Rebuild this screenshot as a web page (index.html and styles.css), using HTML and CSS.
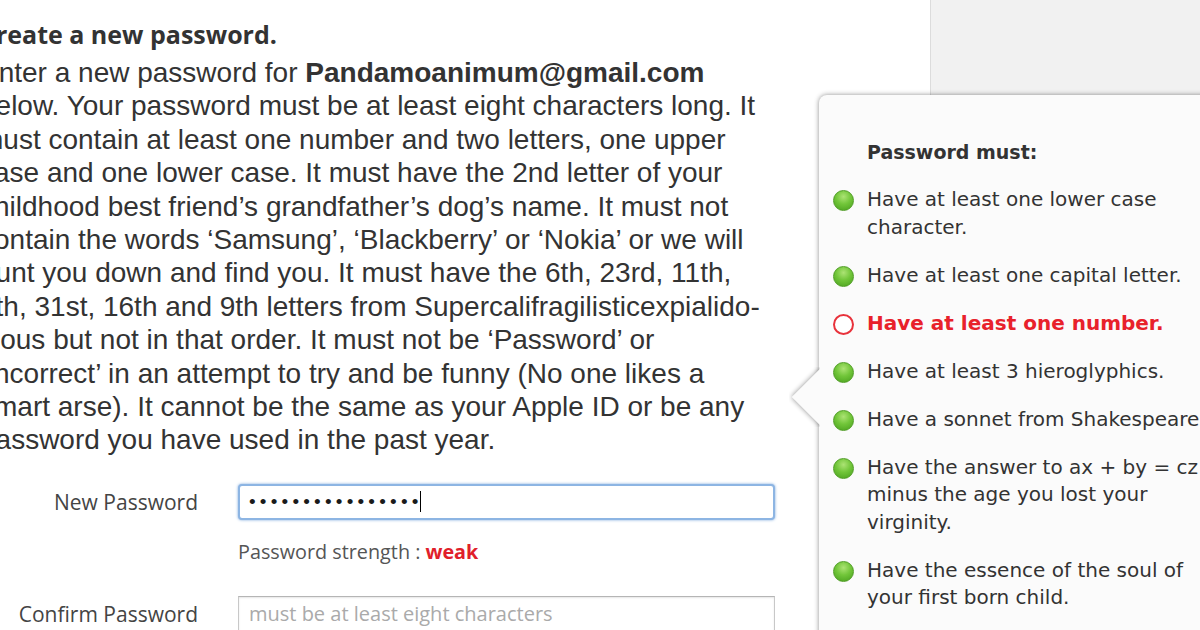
FILE: index.html
```html
<!DOCTYPE html>
<html lang="en">
<head>
  <meta charset="UTF-8" />
  <title>Create a new password</title>
  <link rel="stylesheet" href="styles.css">
</head>
<body>
  <div class="page">
    <div class="content">
      <h1>Create a new password.</h1>
      <p class="intro">
        Enter a new password for <b>Pandamoanimum@gmail.com</b> below. Your password must be at least eight characters long. It must contain at least one number and two letters, one upper case and one lower case. It must have the 2nd letter of your childhood best friend’s grandfather’s dog’s name. It must not contain the words ‘Samsung’, ‘Blackberry’ or ‘Nokia’ or we will hunt you down and find you. It must have the 6th, 23rd, 11th, 4th, 31st, 16th and 9th letters from Supercalifragilisticexpialido&shy;cious but not in that order. It must not be ‘Password’ or ‘Incorrect’ in an attempt to try and be funny (No one likes a smart arse). It cannot be the same as your Apple ID or be any password you have used in the past year.
      </p>

      <form class="form">
        <div class="row">
          <label class="label">New Password</label>
          <div class="field focused">
            <span class="dots">••••••••••••••••</span><span class="caret"></span>
          </div>
        </div>
        <div class="strength">Password strength : <span class="weak">weak</span></div>
        <div class="row">
          <label class="label">Confirm Password</label>
          <div class="field">
            <span class="placeholder">must be at least eight characters</span>
          </div>
        </div>
      </form>
    </div>
    <div class="sidebar"></div>
  </div>

  <div class="tooltip">
    <div class="arrow"></div>
    <h3>Password must:</h3>
    <ul class="rules">
      <li><span class="dot ok"></span><span class="text">Have at least one lower case character.</span></li>
      <li><span class="dot ok"></span><span class="text">Have at least one capital letter.</span></li>
      <li class="fail"><span class="dot"></span><span class="text">Have at least one number.</span></li>
      <li><span class="dot ok"></span><span class="text">Have at least 3 hieroglyphics.</span></li>
      <li><span class="dot ok"></span><span class="text">Have a sonnet from Shakespeare.</span></li>
      <li><span class="dot ok"></span><span class="text">Have the answer to ax + by = cz minus the age you lost your virginity.</span></li>
      <li><span class="dot ok"></span><span class="text">Have the essence of the soul of your first born child.</span></li>
    </ul>
  </div>
</body>
</html>
```

FILE: styles.css
```css
body {
  margin: 0;
  background: #fff;
  font-family: "Liberation Sans", Arial, sans-serif;
  color: #333;
  overflow: hidden;
  height: 630px;
}

.page {
  display: flex;
  height: 630px;
}

.content {
  width: 785px;
  margin-left: -20px;
  padding-top: 19px;
  flex-shrink: 0;
}

h1 {
  font-family: "Open Sans", sans-serif;
  font-weight: bold;
  font-size: 25px;
  line-height: 30px;
  margin: 0 0 7px;
  color: #333;
}

.intro {
  font-size: 28px;
  line-height: 33.4px;
  margin: 0;
}

.form {
  margin-top: 27px;
  font-family: "Open Sans", sans-serif;
}

.row {
  display: flex;
  align-items: center;
  gap: 40px;
}

.label {
  width: 218px;
  flex-shrink: 0;
  text-align: right;
  font-size: 21px;
  color: #444;
}

.field {
  box-sizing: border-box;
  width: 537px;
  height: 36px;
  flex-shrink: 0;
  padding-left: 10px;
  display: flex;
  align-items: center;
  border: 1px solid #c8c8c8;
  border-top-color: #b5b5b5;
  box-shadow: inset 0 1px 2px rgba(0,0,0,0.1);
  background: #fff;
}

.field.focused {
  border: 2px solid #8db5e3;
  border-radius: 4px;
  padding-left: 9px;
  box-shadow: 0 0 3px #7aa7dc;
}

.dots {
  font-family: "Liberation Sans", sans-serif;
  font-size: 19px;
  letter-spacing: 4.2px;
  color: #1a1a1a;
}

.caret {
  width: 1px;
  height: 21px;
  background: #000;
  margin-left: -3px;
}

.placeholder {
  font-size: 20px;
  color: #aaa;
}

.strength {
  margin: 19px 0 31px 258px;
  font-size: 19.8px;
  line-height: 26px;
  color: #555;
}

.weak {
  color: #e0202a;
  font-weight: bold;
}

.sidebar {
  margin-left: auto;
  width: 269px;
  background: #f1f1f1;
  border-left: 1px solid #dcdcdc;
}

/* requirements popup */
.tooltip {
  position: absolute;
  left: 819px;
  top: 95px;
  width: 420px;
  height: 600px;
  box-sizing: border-box;
  padding: 45px 0 0 14px;
  background: #fbfbfb;
  border-radius: 8px;
  box-shadow: 0 0 5px rgba(0,0,0,0.45);
  font-family: "DejaVu Sans", sans-serif;
  color: #333;
}

.arrow {
  position: absolute;
  left: -30px;
  top: 272px;
  width: 31px;
  height: 60px;
  overflow: hidden;
}

.arrow::before {
  content: "";
  position: absolute;
  left: 11px;
  top: 10px;
  width: 40px;
  height: 40px;
  background: #fbfbfb;
  transform: rotate(45deg);
  box-shadow: 0 0 5px rgba(0,0,0,0.45);
}

.tooltip h3 {
  margin: 0 0 22px 34px;
  font-size: 19px;
  line-height: 24px;
  font-weight: bold;
}

.rules {
  list-style: none;
  margin: 0;
  padding: 0;
}

.rules li {
  display: flex;
  gap: 13px;
  margin-bottom: 20.5px;
  font-size: 20px;
  line-height: 27.5px;
}

.rules .text {
  width: 353px;
}

.dot {
  box-sizing: border-box;
  width: 21px;
  height: 21px;
  margin-top: 4px;
  border-radius: 50%;
  flex-shrink: 0;
}

.dot.ok {
  background: radial-gradient(circle at 50% 30%, #ace374 0%, #72c63a 45%, #479f1c 100%);
  border: 1px solid #4f9d24;
}

.fail .dot {
  border: 2px solid #e8323b;
  background: #fff;
}

.fail .text {
  color: #e8212b;
  font-weight: bold;
}
```
